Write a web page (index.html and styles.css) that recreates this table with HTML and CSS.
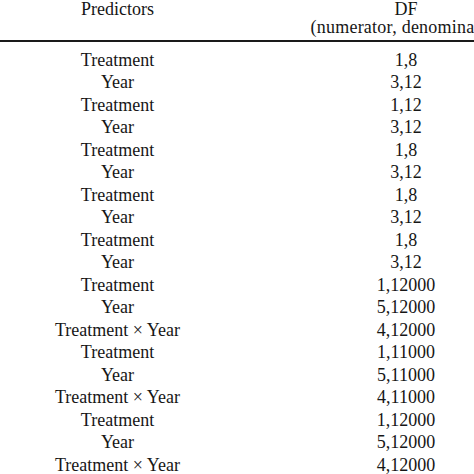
FILE: index.html
```html
<!DOCTYPE html>
<html>
<head>
<meta charset="utf-8">
<link rel="stylesheet" href="styles.css">
</head>
<body>
<div class="page">
  <div class="head">
    <div class="cell">Predictors</div>
    <div class="cell">DF<br><span class="sub">(numerator, denominator)</span></div>
  </div>
  <div class="rows">
    <div class="cell">Treatment</div><div class="cell">1,8</div>
    <div class="cell">Year</div><div class="cell">3,12</div>
    <div class="cell">Treatment</div><div class="cell">1,12</div>
    <div class="cell">Year</div><div class="cell">3,12</div>
    <div class="cell">Treatment</div><div class="cell">1,8</div>
    <div class="cell">Year</div><div class="cell">3,12</div>
    <div class="cell">Treatment</div><div class="cell">1,8</div>
    <div class="cell">Year</div><div class="cell">3,12</div>
    <div class="cell">Treatment</div><div class="cell">1,8</div>
    <div class="cell">Year</div><div class="cell">3,12</div>
    <div class="cell">Treatment</div><div class="cell">1,12000</div>
    <div class="cell">Year</div><div class="cell">5,12000</div>
    <div class="cell">Treatment × Year</div><div class="cell">4,12000</div>
    <div class="cell">Treatment</div><div class="cell">1,11000</div>
    <div class="cell">Year</div><div class="cell">5,11000</div>
    <div class="cell">Treatment × Year</div><div class="cell">4,11000</div>
    <div class="cell">Treatment</div><div class="cell">1,12000</div>
    <div class="cell">Year</div><div class="cell">5,12000</div>
    <div class="cell">Treatment × Year</div><div class="cell">4,12000</div>
  </div>
</div>
</body>
</html>
```
FILE: styles.css
```css
html, body {
  margin: 0;
  padding: 0;
  background: #ffffff;
  overflow: hidden;
}
.page {
  width: 474px;
  height: 474px;
  overflow: hidden;
  font-family: "Liberation Serif", "Times New Roman", serif;
  font-size: 18px;
  color: #161616;
}
.head, .rows {
  display: grid;
  grid-template-columns: 235px 342px;
  width: 577px;
}
.head {
  line-height: 18px;
  padding-bottom: 4px;
  border-bottom: 2px solid #1a1a1a;
}
.rows {
  line-height: 22.5px;
  padding-top: 6.5px;
}
.cell {
  text-align: center;
  white-space: nowrap;
}
.sub {
  white-space: nowrap;
  letter-spacing: 0.25px;
}
```
